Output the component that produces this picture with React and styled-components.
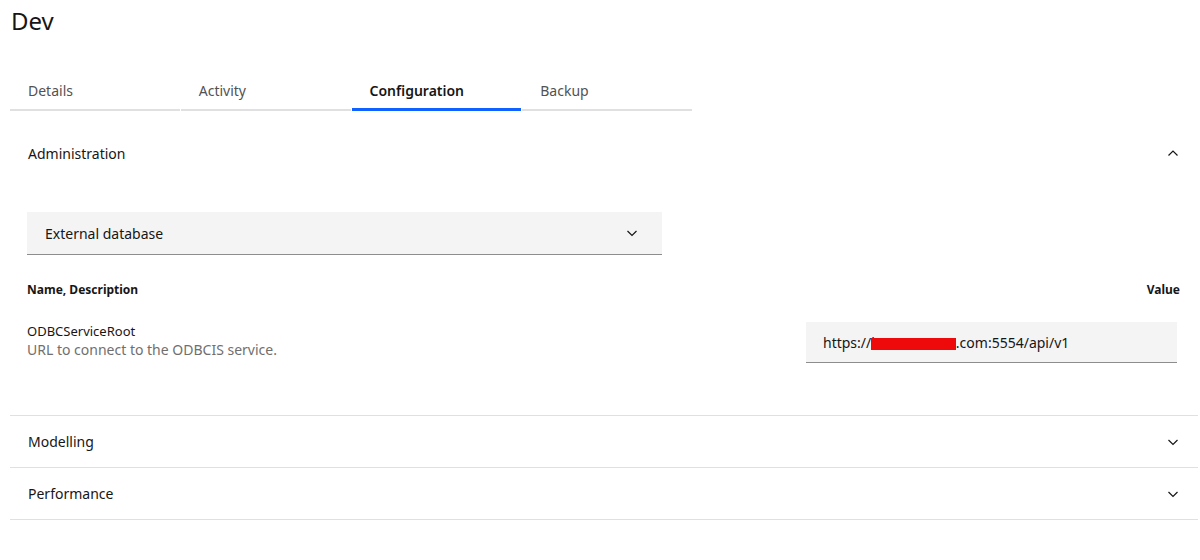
import React, { useState } from 'react';
import styled, { createGlobalStyle } from 'styled-components';

const GlobalStyle = createGlobalStyle`
  body {
    margin: 0;
    background: #fff;
    font-family: "Noto Sans", "Open Sans", sans-serif;
    color: #161616;
  }
`;

const Page = styled.div`
  padding: 0 2px 0 10px;
`;

const Title = styled.h1`
  margin: 0;
  padding: 6px 0 0 1px;
  height: 72px;
  box-sizing: border-box;
  font-size: 24px;
  font-weight: 400;
  line-height: 30px;
  color: #161616;
`;

const TabList = styled.div`
  display: flex;
  width: 682px;
`;

const Tab = styled.button`
  flex: 1;
  height: 39px;
  padding: 0 0 0 18px;
  text-align: left;
  background: none;
  border: 0;
  border-bottom: ${p => (p.$active ? '3px solid #0f62fe' : '2px solid #e0e0e0')};
  margin-right: 1px;
  font-family: inherit;
  font-size: 14px;
  font-weight: ${p => (p.$active ? 600 : 400)};
  color: ${p => (p.$active ? '#161616' : '#525252')};
  box-sizing: border-box;
  padding-top: ${p => (p.$active ? '1px' : '0')};
  cursor: pointer;

  &:last-child {
    margin-right: 0;
  }
`;

const Accordion = styled.div`
  margin-top: 17px;
`;

const Item = styled.div`
  border-bottom: 1px solid #e0e0e0;
`;

const Header = styled.div`
  display: flex;
  align-items: center;
  justify-content: space-between;
  height: ${p => (p.$first ? '50px' : '51px')};
  padding: 0 17px 0 18px;
  font-size: 14px;
  color: #161616;
  cursor: pointer;
`;

const Content = styled.div`
  padding: 34px 21px 52px 17px;
`;

const Dropdown = styled.div`
  display: flex;
  align-items: center;
  justify-content: space-between;
  width: 635px;
  height: 43px;
  box-sizing: border-box;
  padding: 0 22px 0 18px;
  background: #f4f4f4;
  border-bottom: 1px solid #8d8d8d;
  font-size: 14px;
  color: #161616;
`;

const TableHead = styled.div`
  display: flex;
  justify-content: space-between;
  margin: 26px -3px 0 0;
  font-size: 12px;
  font-weight: 700;
  color: #161616;
`;

const Row = styled.div`
  display: flex;
  justify-content: space-between;
  align-items: flex-start;
  margin-top: 25px;
`;

const Name = styled.div`
  font-size: 13px;
  line-height: 17px;
  color: #161616;
`;

const Desc = styled.div`
  font-size: 14px;
  line-height: 19px;
  color: #6f6f6f;
`;

const Field = styled.div`
  width: 371px;
  height: 41px;
  margin-top: -1px;
  box-sizing: border-box;
  display: flex;
  align-items: center;
  padding-left: 17px;
  background: #f4f4f4;
  border-bottom: 1px solid #8d8d8d;
  font-size: 14px;
  color: #161616;
`;

const Redact = styled.span`
  display: inline-block;
  width: 85px;
  height: 12px;
  margin: 2px 0 -2px -9px;
  background: #ee0a0a;
`;

const Chevron = ({ up }) => (
  <svg width="16" height="16" viewBox="0 0 16 16" fill="none" stroke="#161616" strokeWidth="1.2">
    {up ? <path d="M3.5 10.5 8 6l4.5 4.5" /> : <path d="M3.5 6 8 10.5 12.5 6" />}
  </svg>
);

const tabs = ['Details', 'Activity', 'Configuration', 'Backup'];

export default function App() {
  const [tab, setTab] = useState('Configuration');

  return (
    <Page>
      <GlobalStyle />
      <Title>Dev</Title>
      <TabList>
        {tabs.map(t => (
          <Tab key={t} $active={t === tab} onClick={() => setTab(t)}>{t}</Tab>
        ))}
      </TabList>
      <Accordion>
        <Item>
          <Header $first>
            <span>Administration</span>
            <Chevron up />
          </Header>
          <Content>
            <Dropdown>
              <span>External database</span>
              <Chevron />
            </Dropdown>
            <TableHead>
              <span>Name, Description</span>
              <span>Value</span>
            </TableHead>
            <Row>
              <div>
                <Name>ODBCServiceRoot</Name>
                <Desc>URL to connect to the ODBCIS service.</Desc>
              </div>
              <Field>
                https://b<Redact />.com:5554/api/v1
              </Field>
            </Row>
          </Content>
        </Item>
        <Item>
          <Header>
            <span>Modelling</span>
            <Chevron />
          </Header>
        </Item>
        <Item>
          <Header>
            <span>Performance</span>
            <Chevron />
          </Header>
        </Item>
      </Accordion>
    </Page>
  );
}
